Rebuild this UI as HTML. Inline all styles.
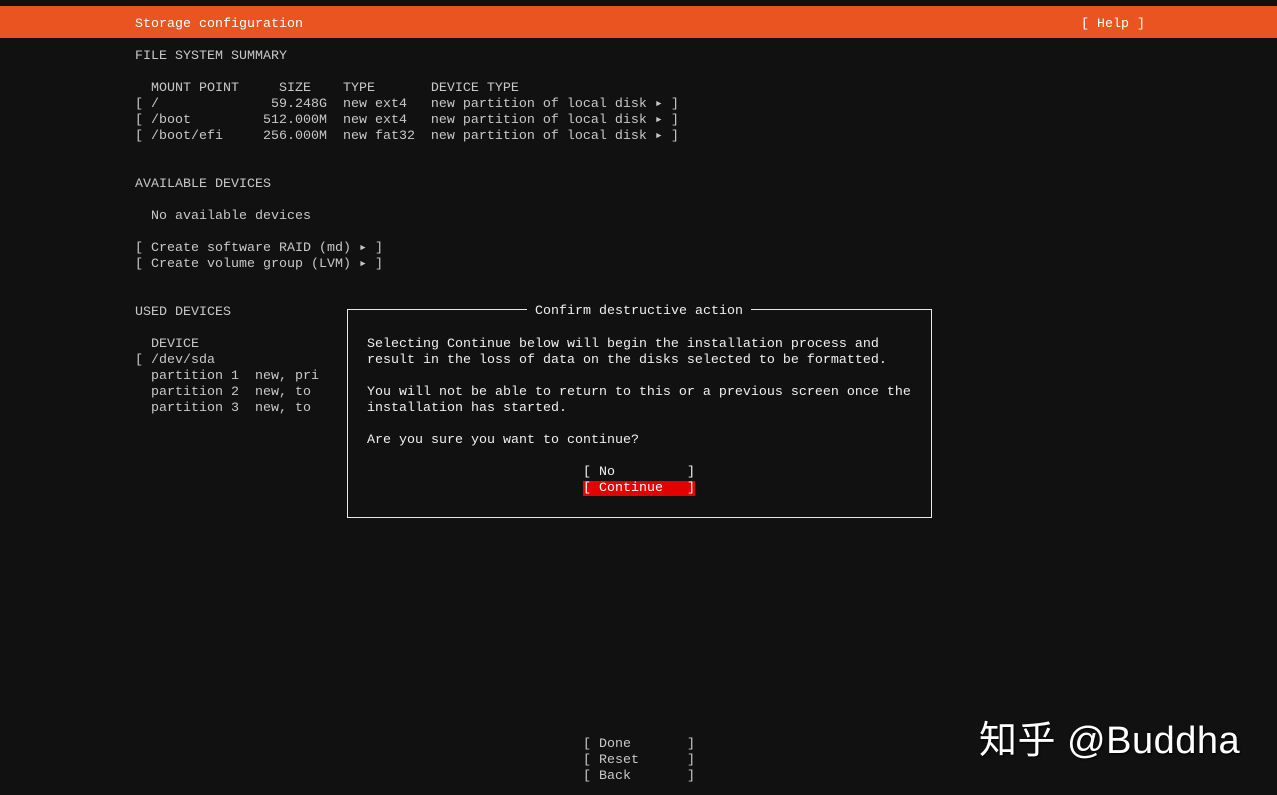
<!DOCTYPE html>
<html><head><meta charset="utf-8"><style>
html,body{margin:0;padding:0;background:#111;width:1277px;height:795px;overflow:hidden;position:relative}
pre{margin:0;position:absolute;font-family:"Liberation Mono",monospace;font-size:13.333px;line-height:16px;color:#c8c8c8;white-space:pre}
#bar{position:absolute;left:0;top:6px;width:1277px;height:32px;background:#e95420}
#dlg{position:absolute;left:347px;top:309px;width:583px;height:207px;border:1px solid #e8e8e8;background:#111}
.hl{background:#e50000;color:#fff}
#wm{position:absolute;left:979px;top:716px;font-family:"Liberation Sans","Noto Sans CJK SC",sans-serif;font-size:38px;color:#fff;text-shadow:1px 1px 2px #000;line-height:50px;letter-spacing:0.5px}
</style></head><body>
<div id="bar"></div>
<pre style="left:135px;top:17px;color:#fff">Storage configuration</pre>
<pre style="left:1081px;top:17px;color:#fff">[ Help ]</pre>
<pre style="left:135px;top:49px">FILE SYSTEM SUMMARY

  MOUNT POINT     SIZE    TYPE       DEVICE TYPE
[ /              59.248G  new ext4   new partition of local disk ▸ ]
[ /boot         512.000M  new ext4   new partition of local disk ▸ ]
[ /boot/efi     256.000M  new fat32  new partition of local disk ▸ ]


AVAILABLE DEVICES

  No available devices

[ Create software RAID (md) ▸ ]
[ Create volume group (LVM) ▸ ]


USED DEVICES

  DEVICE
[ /dev/sda
  partition 1  new, pri
  partition 2  new, to
  partition 3  new, to</pre>
<div id="dlg"></div>
<pre style="left:527px;top:304px;color:#f0f0f0;background:#111;padding:0 8px">Confirm destructive action</pre>
<pre style="left:367px;top:337px;color:#f0f0f0">Selecting Continue below will begin the installation process and
result in the loss of data on the disks selected to be formatted.

You will not be able to return to this or a previous screen once the
installation has started.

Are you sure you want to continue?</pre>
<pre style="left:583px;top:465px;color:#f0f0f0">[ No         ]
<span class="hl">[ Continue   ]</span></pre>
<pre style="left:583px;top:737px">[ Done       ]
[ Reset      ]
[ Back       ]</pre>
<div id="wm">知乎 @Buddha</div>
</body></html>
